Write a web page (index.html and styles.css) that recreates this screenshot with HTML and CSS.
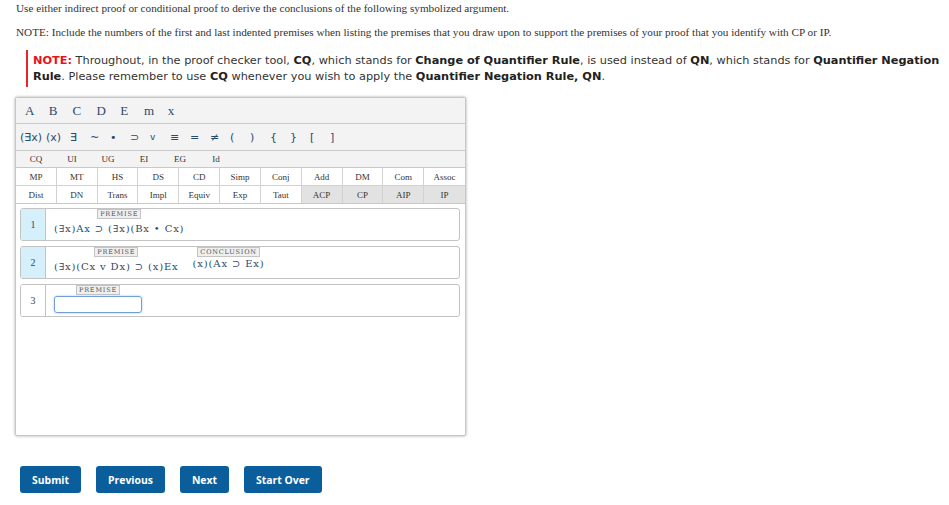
FILE: index.html
```html
<!DOCTYPE html>
<html>
<head>
<meta charset="utf-8">
<link rel="stylesheet" href="styles.css">
</head>
<body>
<div class="page">
  <p class="instr first">Use either indirect proof or conditional proof to derive the conclusions of the following symbolized argument.</p>
  <p class="instr second">NOTE: Include the numbers of the first and last indented premises when listing the premises that you draw upon to support the premises of your proof that you identify with CP or IP.</p>
  <div class="note">
    <span class="red">NOTE:</span> Throughout, in the proof checker tool, <b>CQ</b>, which stands for <b>Change of Quantifier Rule</b>, is used instead of <b>QN</b>, which stands for <b>Quantifier Negation Rule</b>. Please remember to use <b>CQ</b> whenever you wish to apply the <b>Quantifier Negation Rule, QN</b>.
  </div>

  <div class="checker">
    <div class="bar letters">
      <span>A</span><span>B</span><span>C</span><span>D</span><span>E</span><span>m</span><span>x</span>
    </div>
    <div class="bar symbols">
      <span class="w">(∃x)</span><span class="w2">(x)</span><span>∃</span><span>~</span><span>•</span><span>⊃</span><span class="sm">v</span><span>≡</span><span>=</span><span>≠</span><span>(</span><span>)</span><span>{</span><span>}</span><span>[</span><span>]</span>
    </div>
    <div class="bar quant">
      <span>CQ</span><span>UI</span><span>UG</span><span>EI</span><span>EG</span><span>Id</span>
    </div>
    <div class="rules">
      <span>MP</span><span>MT</span><span>HS</span><span>DS</span><span>CD</span><span>Simp</span><span>Conj</span><span>Add</span><span>DM</span><span>Com</span><span>Assoc</span>
      <span>Dist</span><span>DN</span><span>Trans</span><span>Impl</span><span>Equiv</span><span>Exp</span><span>Taut</span><span class="off">ACP</span><span class="off">CP</span><span class="off">AIP</span><span class="off">IP</span>
    </div>
    <div class="proof">
      <div class="line given">
        <div class="num">1</div>
        <div class="body">
          <div class="item"><span class="tag">PREMISE</span><span class="formula">(∃x)Ax ⊃ (∃x)(Bx • Cx)</span></div>
        </div>
      </div>
      <div class="line given">
        <div class="num">2</div>
        <div class="body">
          <div class="item"><span class="tag">PREMISE</span><span class="formula">(∃x)(Cx v Dx) ⊃ (x)Ex</span></div>
          <div class="item concl"><span class="tag">CONCLUSION</span><span class="formula">(x)(Ax ⊃ Ex)</span></div>
        </div>
      </div>
      <div class="line">
        <div class="num">3</div>
        <div class="body">
          <div class="item"><span class="tag">PREMISE</span><span class="entry"></span></div>
        </div>
      </div>
    </div>
  </div>

  <div class="buttons">
    <button class="btn">Submit</button>
    <button class="btn">Previous</button>
    <button class="btn">Next</button>
    <button class="btn">Start Over</button>
  </div>
</div>
</body>
</html>
```

FILE: styles.css
```css
html, body {
  margin: 0;
  padding: 0;
  background: #fff;
}

.page {
  font-family: "Liberation Serif", "Times New Roman", serif;
  color: #222;
}

.instr {
  margin: 0;
  padding-left: 16px;
  font-size: 11.2px;
  line-height: 14px;
  color: #333;
}

.instr.first { padding-top: 1px; }
.instr.second { margin-top: 10px; }

.note {
  margin: 11px 0 0 26px;
  border-left: 2px solid #e8262a;
  padding: 3px 0 2px 5px;
  font-family: "DejaVu Sans", Verdana, sans-serif;
  font-size: 11.3px;
  line-height: 16px;
  color: #333;
  width: 916px;
}

.note .red {
  color: #e8141b;
  font-weight: bold;
}

.note b { color: #222; }

.checker {
  margin: 10px 0 0 15px;
  width: 449px;
  height: 337px;
  border: 1px solid #bfc9d4;
  border-radius: 2px;
  box-shadow: 0 0 3px rgba(0, 0, 0, 0.35);
  background: #fff;
  display: flex;
  flex-direction: column;
}

.bar {
  display: flex;
  align-items: center;
  background: #f3f3f3;
  border-bottom: 1px solid #c9c9c9;
  color: #2c4a6c;
}

.letters {
  height: 25px;
  padding-left: 9px;
  font-family: "Liberation Serif", serif;
  font-size: 13px;
}

.letters span { width: 23.8px; }

.symbols {
  height: 26px;
  padding-left: 2px;
  font-family: "DejaVu Sans", sans-serif;
  font-size: 11px;
}

.symbols span {
  width: 20px;
  text-align: left;
  padding-left: 5px;
  box-sizing: border-box;
}

.symbols span.w { width: 27px; padding-left: 2px; }
.symbols span.w2 { width: 20px; padding-left: 1px; }
.symbols span.sm { font-size: 9px; }

.quant {
  height: 16px;
  padding-left: 2px;
  font-size: 9px;
  color: #333;
}

.quant span {
  width: 36px;
  text-align: center;
}

.rules {
  display: grid;
  grid-template-columns: repeat(11, 1fr);
  border-bottom: 1px solid #c9c9c9;
  font-size: 9px;
  color: #333;
}

.rules span {
  height: 17px;
  display: flex;
  align-items: center;
  justify-content: center;
  border-right: 1px solid #d2d2d2;
  background: #fff;
}

.rules span:nth-child(-n+11) { border-bottom: 1px solid #d2d2d2; height: 17px; }
.rules span:nth-child(11n) { border-right: none; }
.rules span.off { background: #e2e2e2; }

.proof {
  padding: 4px 5px 0 4px;
  display: flex;
  flex-direction: column;
  gap: 5px;
}

.line {
  display: flex;
  height: 31px;
  border: 1px solid #c3c3c3;
  border-radius: 3px;
  overflow: hidden;
  background: #fff;
}

.num {
  width: 24px;
  border-right: 1px solid #c3c3c3;
  display: flex;
  align-items: center;
  justify-content: center;
  font-size: 10px;
  color: #2c4a6c;
  background: #fff;
}

.line.given .num { background: #d5effb; }

.body {
  display: flex;
  gap: 14px;
  padding-left: 8px;
}

.item {
  display: flex;
  flex-direction: column;
  align-items: center;
}

.tag {
  font-family: "DejaVu Serif", serif;
  font-size: 6.5px;
  letter-spacing: 0.8px;
  line-height: 8px;
  padding: 0 2px;
  background: #efefef;
  border: 1px solid #c4c4c4;
  color: #555;
}

.formula {
  font-family: "DejaVu Serif", serif;
  font-size: 10px;
  letter-spacing: 0.85px;
  color: #2c4a6c;
  margin-top: 3px;
  line-height: 13px;
}

.concl .formula { margin-top: 0; }

.entry {
  display: block;
  width: 88px;
  height: 17px;
  margin-top: 1px;
  border: 1px solid #6f9fd8;
  border-radius: 3px;
  box-shadow: 0 0 2px rgba(80, 140, 220, 0.6);
  box-sizing: border-box;
}

.buttons {
  display: flex;
  gap: 15px;
  margin: 30px 0 0 20px;
}

.btn {
  font-family: "Open Sans", sans-serif;
  font-weight: bold;
  font-size: 10.4px;
  color: #fff;
  background: #0b5e9c;
  border: none;
  border-radius: 3px;
  height: 27px;
  padding: 0 12px;
}
```
